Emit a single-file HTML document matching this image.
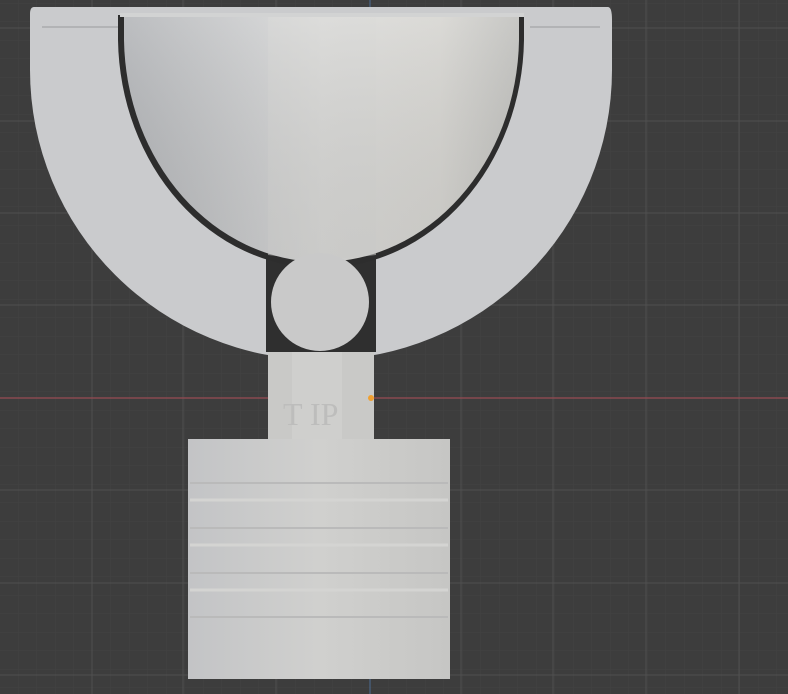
<!DOCTYPE html>
<html><head><style>
html,body{margin:0;padding:0;background:#3d3d3d;}
svg{display:block}
</style></head><body>
<svg width="788" height="694" viewBox="0 0 788 694" xmlns="http://www.w3.org/2000/svg">
<defs>
<pattern id="minor" width="18.5" height="18.5" patternUnits="userSpaceOnUse" x="-0.5" y="3">
<path d="M0 0H18.5M0 0V18.5" stroke="#424242" stroke-width="1" fill="none"/>
</pattern>
<linearGradient id="bowl" x1="0" x2="1" y1="0" y2="0">
<stop offset="0" stop-color="#b3b5b8"/><stop offset="0.35" stop-color="#cdcecf"/>
<stop offset="0.5" stop-color="#dadad8"/><stop offset="0.8" stop-color="#d6d5d1"/><stop offset="1" stop-color="#c0c0bd"/>
</linearGradient>
<linearGradient id="bowlv" x1="0" x2="0" y1="0" y2="1">
<stop offset="0" stop-color="#fff" stop-opacity="0.12"/><stop offset="1" stop-color="#000" stop-opacity="0.06"/>
</linearGradient>
<linearGradient id="base" x1="0" x2="1">
<stop offset="0" stop-color="#c3c4c6"/><stop offset="0.5" stop-color="#d0d0ce"/><stop offset="1" stop-color="#c6c6c4"/>
</linearGradient>
</defs>
<rect width="788" height="694" fill="#3d3d3d"/>
<rect width="788" height="694" fill="url(#minor)"/>
<g stroke="#505050" stroke-width="1">
<path d="M92 0V694M183 0V694M276 0V694M461 0V694M553 0V694M646 0V694M739 0V694"/>
<path d="M0 28H788M0 121H788M0 213H788M0 305H788M0 490H788M0 583H788M0 675H788"/>
</g>
<line x1="0" y1="398" x2="788" y2="398" stroke="#8a4a50" stroke-width="1.5"/>
<line x1="370" y1="0" x2="370" y2="694" stroke="#4c6c94" stroke-width="1"/>
<path d="M34 7H608Q612 7 612 20V70A291 290 0 0 1 321 360A291 290 0 0 1 30 70V14Q30 7 34 7Z" fill="#cacbcd"/>
<path d="M42 26H118V28H42Z M530 26H600V28H530Z" fill="#b2b3b5"/>
<rect x="266" y="240" width="110" height="112" fill="#2f2f2f"/>
<path d="M118 15H524V40A203 232 0 0 1 321 268A203 232 0 0 1 118 40Z" fill="#2d2d2d"/>
<path d="M124 15H519V40A198 226 0 0 1 321 262A198 226 0 0 1 124 40Z" fill="url(#bowl)"/>
<path d="M268 15H376V255Q321 262 268 255Z" fill="#d6d6d3" opacity="0.5"/>
<path d="M124 15H519V40A198 226 0 0 1 321 262A198 226 0 0 1 124 40Z" fill="url(#bowlv)"/>
<rect x="120" y="13" width="404" height="4" fill="#d2d3d3"/>
<circle cx="320" cy="302" r="49" fill="#c9c9c9"/>
<rect x="268" y="352" width="106" height="88" fill="#c9c9c7"/>
<rect x="292" y="352" width="50" height="88" fill="#cfcfcd"/>
<circle cx="371" cy="398" r="3" fill="#f0a030"/>
<text x="283" y="425" font-family="Liberation Serif,serif" font-size="32" fill="#bdbdbc">T  IP</text>
<rect x="188" y="439" width="262" height="240" fill="url(#base)"/>
<g stroke="#bababa" stroke-width="2">
<path d="M190 483H448M190 528H448M190 573H448M190 617H448"/>
</g>
<g stroke="#d4d4d2" stroke-width="3">
<path d="M190 500H448M190 545H448M190 590H448"/>
</g>
</svg>
</body></html>
